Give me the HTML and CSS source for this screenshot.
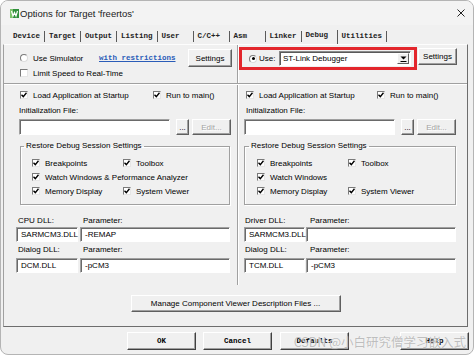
FILE: index.html
```html
<!DOCTYPE html>
<html>
<head>
<meta charset="utf-8">
<title>Options for Target 'freertos'</title>
<link rel="stylesheet" href="styles.css">
</head>
<body>
<div class="window">
	<div class="titlebar">
		<svg class="app-icon" width="9" height="9" viewBox="0 0 9 9">
			<rect width="9" height="9" fill="#2f8f3c"/>
			<rect width="3" height="9" fill="#7cc36b"/>
			<polyline points="1.5,2 3,7 4.5,3.5 6,7 7.5,2" fill="none" stroke="#fff" stroke-width="1.2"/>
		</svg>
		<span class="title">Options for Target 'freertos'</span>
		<svg class="close" width="8" height="8" viewBox="0 0 8 8">
			<path d="M0.5 0.5 L7.5 7.5 M7.5 0.5 L0.5 7.5" stroke="#222" stroke-width="1"/>
		</svg>
	</div>

	<div class="tabs">
		<span class="tab">Device</span>
		<span class="tab">Target</span>
		<span class="tab">Output</span>
		<span class="tab">Listing</span>
		<span class="tab">User</span>
		<span class="tab">C/C++</span>
		<span class="tab">Asm</span>
		<span class="tab">Linker</span>
		<span class="tab active">Debug</span>
		<span class="tab">Utilities</span>
	</div>

	<div class="page">
		<div class="split top">
			<div class="half left">
				<div class="line sim">
					<label class="opt sim-opt"><span class="radio"></span>Use Simulator</label>
					<a class="restrict">with restrictions</a>
					<button class="btn settings">Settings</button>
				</div>
				<div class="line small">
					<label class="opt"><span class="check"></span>Limit Speed to Real-Time</label>
				</div>
			</div>
			<div class="half right">
				<div class="line use">
					<div class="highlight">
						<label class="opt use-opt"><span class="radio on"></span>Use:</label>
						<div class="combo"><span class="combo-text">ST-Link Debugger</span><span class="drop"><svg width="7" height="6" viewBox="0 0 7 6"><path d="M0.5 0.5 H6.5 L3.5 3.5 Z" fill="#000"/><path d="M0.5 5.5 H6.5" stroke="#000"/></svg></span></div>
					</div>
					<button class="btn settings-r">Settings</button>
				</div>
			</div>
		</div>

		<div class="sep"></div>

		<div class="split main">
			<div class="half left">
				<div class="line checks">
					<label class="opt first"><span class="check on"><svg width="6" height="6" viewBox="0 0 6 6"><path d="M0.5 2.8 L2.3 4.6 L5.5 0.8" fill="none" stroke="#000" stroke-width="1.4"/></svg></span>Load Application at Startup</label>
					<label class="opt"><span class="check on"><svg width="6" height="6" viewBox="0 0 6 6"><path d="M0.5 2.8 L2.3 4.6 L5.5 0.8" fill="none" stroke="#000" stroke-width="1.4"/></svg></span>Run to main()</label>
				</div>
				<div class="line label init">Initialization File:</div>
				<div class="file-row">
					<div class="field file"></div>
					<button class="btn dots">...</button>
					<button class="btn edit" disabled>Edit...</button>
				</div>
				<fieldset class="group">
					<legend>Restore Debug Session Settings</legend>
					<div class="grow">
						<label class="opt first"><span class="check on"><svg width="6" height="6" viewBox="0 0 6 6"><path d="M0.5 2.8 L2.3 4.6 L5.5 0.8" fill="none" stroke="#000" stroke-width="1.4"/></svg></span>Breakpoints</label>
						<label class="opt"><span class="check on"><svg width="6" height="6" viewBox="0 0 6 6"><path d="M0.5 2.8 L2.3 4.6 L5.5 0.8" fill="none" stroke="#000" stroke-width="1.4"/></svg></span>Toolbox</label>
					</div>
					<div class="grow">
						<label class="opt"><span class="check on"><svg width="6" height="6" viewBox="0 0 6 6"><path d="M0.5 2.8 L2.3 4.6 L5.5 0.8" fill="none" stroke="#000" stroke-width="1.4"/></svg></span>Watch Windows &amp; Peformance Analyzer</label>
					</div>
					<div class="grow">
						<label class="opt first"><span class="check on"><svg width="6" height="6" viewBox="0 0 6 6"><path d="M0.5 2.8 L2.3 4.6 L5.5 0.8" fill="none" stroke="#000" stroke-width="1.4"/></svg></span>Memory Display</label>
						<label class="opt"><span class="check on"><svg width="6" height="6" viewBox="0 0 6 6"><path d="M0.5 2.8 L2.3 4.6 L5.5 0.8" fill="none" stroke="#000" stroke-width="1.4"/></svg></span>System Viewer</label>
					</div>
				</fieldset>
				<div class="dll-labels first"><span class="dll-name">CPU DLL:</span><span class="dll-param">Parameter:</span></div>
				<div class="dll-row"><div class="field dll">SARMCM3.DLL</div><div class="field param">-REMAP</div></div>
				<div class="dll-labels"><span class="dll-name">Dialog DLL:</span><span class="dll-param">Parameter:</span></div>
				<div class="dll-row second"><div class="field dll">DCM.DLL</div><div class="field param">-pCM3</div></div>
			</div>

			<div class="half right">
				<div class="line checks">
					<label class="opt first"><span class="check on"><svg width="6" height="6" viewBox="0 0 6 6"><path d="M0.5 2.8 L2.3 4.6 L5.5 0.8" fill="none" stroke="#000" stroke-width="1.4"/></svg></span>Load Application at Startup</label>
					<label class="opt"><span class="check on"><svg width="6" height="6" viewBox="0 0 6 6"><path d="M0.5 2.8 L2.3 4.6 L5.5 0.8" fill="none" stroke="#000" stroke-width="1.4"/></svg></span>Run to main()</label>
				</div>
				<div class="line label init">Initialization File:</div>
				<div class="file-row">
					<div class="field file"></div>
					<button class="btn dots">...</button>
					<button class="btn edit" disabled>Edit...</button>
				</div>
				<fieldset class="group">
					<legend>Restore Debug Session Settings</legend>
					<div class="grow">
						<label class="opt first"><span class="check on"><svg width="6" height="6" viewBox="0 0 6 6"><path d="M0.5 2.8 L2.3 4.6 L5.5 0.8" fill="none" stroke="#000" stroke-width="1.4"/></svg></span>Breakpoints</label>
						<label class="opt"><span class="check on"><svg width="6" height="6" viewBox="0 0 6 6"><path d="M0.5 2.8 L2.3 4.6 L5.5 0.8" fill="none" stroke="#000" stroke-width="1.4"/></svg></span>Toolbox</label>
					</div>
					<div class="grow">
						<label class="opt"><span class="check on"><svg width="6" height="6" viewBox="0 0 6 6"><path d="M0.5 2.8 L2.3 4.6 L5.5 0.8" fill="none" stroke="#000" stroke-width="1.4"/></svg></span>Watch Windows</label>
					</div>
					<div class="grow">
						<label class="opt first"><span class="check on"><svg width="6" height="6" viewBox="0 0 6 6"><path d="M0.5 2.8 L2.3 4.6 L5.5 0.8" fill="none" stroke="#000" stroke-width="1.4"/></svg></span>Memory Display</label>
						<label class="opt"><span class="check on"><svg width="6" height="6" viewBox="0 0 6 6"><path d="M0.5 2.8 L2.3 4.6 L5.5 0.8" fill="none" stroke="#000" stroke-width="1.4"/></svg></span>System Viewer</label>
					</div>
				</fieldset>
				<div class="dll-labels first"><span class="dll-name">Driver DLL:</span><span class="dll-param">Parameter:</span></div>
				<div class="dll-row"><div class="field dll">SARMCM3.DLL</div><div class="field param"></div></div>
				<div class="dll-labels"><span class="dll-name">Dialog DLL:</span><span class="dll-param">Parameter:</span></div>
				<div class="dll-row second"><div class="field dll">TCM.DLL</div><div class="field param">-pCM3</div></div>
			</div>
		</div>

		<div class="manage">
			<button class="btn manage-btn">Manage Component Viewer Description Files ...</button>
		</div>
	</div>

	<div class="actions">
		<button class="btn action ok">OK</button>
		<button class="btn action">Cancel</button>
		<button class="btn action">Defaults</button>
		<button class="btn action help">Help</button>
	</div>

	<div class="watermark">CSDN @小白研究僧学习嵌入式</div>
</div>
</body>
</html>
```

FILE: styles.css
```css
body {
	margin: 0;
	background: #fff;
}

.window {
	position: relative;
	width: 474px;
	height: 355px;
	box-sizing: border-box;
	border: 1px solid #b4b4b4;
	border-radius: 8px;
	background: #f0f0f0;
	display: flex;
	flex-direction: column;
	overflow: hidden;
	font: 8px "Liberation Sans", Arial, sans-serif;
	color: #000;
}

/* title bar */
.titlebar {
	height: 24px;
	display: flex;
	align-items: center;
	padding: 0 8px 0 9px;
	background: #f3f3f3;
}
.title {
	margin-left: 1px;
	font-size: 9.5px;
	color: #1a1a1a;
}
.close {
	margin-left: auto;
}

/* tab strip */
.tabs {
	height: 19px;
	display: flex;
	align-items: flex-end;
	padding-left: 8px;
	font: bold 7.5px "Liberation Mono", "Courier New", monospace;
	color: #222;
}
.tab {
	height: 11px;
	line-height: 11px;
	min-width: 36px;
	box-sizing: border-box;
	padding: 0 4px;
	margin-bottom: 2px;
	border-right: 1px solid #5a5a5a;
}
.tab.active {
	height: 14px;
	line-height: 10px;
	margin-bottom: 0;
}

/* tab page */
.page {
	height: 283px;
	box-sizing: border-box;
	margin: 0 5px 0 2px;
	border: 1px solid;
	border-color: #fdfdfd #6d6d6d #6d6d6d #a0a0a0;
	display: flex;
	flex-direction: column;
}

.split {
	display: flex;
}
.split.top {
	height: 38px;
}
.split.main {
	height: 200px;
}
.half.left {
	width: 233px;
	box-sizing: border-box;
	padding: 0 5px 0 12px;
	display: flex;
	flex-direction: column;
}
.half.right {
	flex: 1;
	border-left: 1px solid #a0a0a0;
	box-shadow: inset 1px 0 0 #fff;
	padding: 0 10px 0 6px;
	display: flex;
	flex-direction: column;
}

.sep {
	height: 1px;
	background: #a0a0a0;
	border-bottom: 1px solid #fff;
}

.line {
	display: flex;
	align-items: center;
	height: 12px;
	white-space: nowrap;
}
.line.sim {
	height: 18px;
	margin-top: 4px;
	padding-left: 4px;
}
.line.small {
	padding-left: 4px;
}
.line.use {
	height: auto;
	align-items: flex-start;
	margin-left: -5px;
}
.line.checks {
	margin-top: 4px;
}
.left .line.checks {
	padding-left: 4px;
}
.right .line.checks {
	padding-left: 2px;
}
.line.init {
	margin-top: 3px;
}
.left .line.init {
	padding-left: 3px;
}
.right .line.init {
	padding-left: 2px;
}

/* options */
.opt {
	display: flex;
	align-items: center;
	white-space: nowrap;
}
.left .checks .opt.first {
	width: 133px;
}
.right .checks .opt.first {
	width: 131px;
}
.sim-opt {
	width: 79px;
}

.check {
	width: 8px;
	height: 8px;
	box-sizing: border-box;
	margin-right: 5px;
	background: #fff;
	border: 1px solid;
	border-color: #7a7a7a #e6e6e6 #e6e6e6 #7a7a7a;
	display: flex;
	align-items: center;
	justify-content: center;
	flex: none;
}
.radio {
	width: 8px;
	height: 8px;
	box-sizing: border-box;
	margin-right: 5px;
	border-radius: 50%;
	background: #fff;
	border: 1px solid;
	border-color: #7a7a7a #dcdcdc #dcdcdc #7a7a7a;
	display: flex;
	align-items: center;
	justify-content: center;
	flex: none;
}
.radio.on::after {
	content: "";
	width: 3px;
	height: 3px;
	border-radius: 50%;
	background: #000;
}
.use-opt .radio {
	margin-right: 2px;
}

.restrict {
	font: bold 7.5px "Liberation Mono", "Courier New", monospace;
	color: #2a5cb8;
	text-decoration: underline;
}

/* buttons and fields */
.btn {
	margin: 0;
	padding: 0;
	background: #f0f0f0;
	border: 1px solid;
	border-color: #fff #5f5f5f #5f5f5f #fff;
	box-shadow: inset -1px -1px 0 #a0a0a0;
	font: 8px "Liberation Sans", Arial, sans-serif;
	color: #000;
	white-space: nowrap;
}
.btn:disabled {
	color: #a3a3a3;
	text-shadow: 1px 1px 0 #fff;
}
.settings {
	margin-left: auto;
	width: 44px;
	height: 18px;
}
.settings-r {
	width: 39px;
	height: 17px;
	margin: 3px 0 0 1px;
}

.field {
	box-sizing: border-box;
	background: #fff;
	border: 1px solid;
	border-color: #a0a0a0 #fff #fff #a0a0a0;
	box-shadow: inset 1px 1px 0 #6a6a6a;
	padding-left: 4px;
	display: flex;
	align-items: center;
	white-space: nowrap;
}

.highlight {
	width: 178px;
	height: 23px;
	box-sizing: border-box;
	margin-top: 2px;
	border: 3px solid #e3262c;
	padding: 0 3px 0 7px;
	display: flex;
	align-items: center;
}
.combo {
	margin-left: auto;
	width: 132px;
	height: 15px;
	box-sizing: border-box;
	background: #fff;
	border: 1px solid;
	border-color: #8a8a8a #fff #fff #8a8a8a;
	box-shadow: inset 1px 1px 0 #5a5a5a;
	display: flex;
	align-items: center;
	padding: 0 1px 0 3px;
}
.combo-text {
	flex: 1;
}
.drop {
	width: 12px;
	height: 11px;
	box-sizing: border-box;
	background: #f0f0f0;
	border: 1px solid;
	border-color: #fff #5f5f5f #5f5f5f #fff;
	display: flex;
	align-items: center;
	justify-content: center;
}

.file-row {
	display: flex;
	height: 16px;
	margin-top: 3px;
}
.left .file-row {
	padding-left: 3px;
	padding-right: 1px;
}
.right .file-row {
	padding-right: 1px;
}
.field.file {
	width: 151px;
}
.dots {
	width: 13px;
	margin-left: 6px;
}
.edit {
	flex: 1;
	margin-left: 3px;
}

/* group box */
.group {
	margin: 5px 2px 0 4px;
	padding: 4px 0 6px 11px;
	border: 1px solid #a0a0a0;
	box-shadow: 1px 1px 0 #fff, inset 1px 1px 0 #fff;
	min-width: 0;
}
.right .group {
	margin: 5px 1px 0 0;
	padding-left: 12px;
}
.group legend {
	height: 12px;
	line-height: 12px;
	padding: 0 2px;
	margin-left: -8px;
}
.grow {
	display: flex;
	align-items: center;
	height: 14px;
	white-space: nowrap;
}
.grow .opt.first {
	width: 91px;
}

/* dll section */
.dll-labels {
	display: flex;
	height: 12px;
	align-items: center;
	margin-top: 1px;
	white-space: nowrap;
}
.dll-labels.first {
	margin-top: 9px;
}
.dll-name {
	width: 64px;
	padding-left: 2px;
	box-sizing: border-box;
}
.dll-param {
	padding-left: 3px;
}
.right .dll-name {
	width: 62px;
	padding-left: 1px;
}
.right .dll-param {
	padding-left: 4px;
}
.dll-row {
	display: flex;
	height: 15px;
	margin-top: 1px;
}
.dll-row.second {
	margin-top: 3px;
}
.left .dll-row {
	padding-right: 2px;
}
.right .dll-row {
	padding-right: 1px;
}
.field.dll {
	width: 62px;
	flex: none;
}
.right .field.dll {
	width: 61px;
}
.field.param {
	flex: 1;
	margin-left: 2px;
}
.right .field.param {
	margin-left: 1px;
}

.manage {
	display: flex;
	justify-content: center;
	margin-top: 10px;
}
.manage-btn {
	width: 210px;
	height: 17px;
}

/* dialog buttons */
.actions {
	flex: 1;
	display: flex;
	align-items: flex-start;
	padding: 5px 0 0 126px;
}
.action {
	width: 69px;
	height: 18px;
	margin-right: 8px;
	font: bold 7.5px "Liberation Mono", "Courier New", monospace;
	border-color: #fff #404040 #404040 #fff;
}
.action.ok {
	margin-right: 7px;
}
.action.help {
	margin: 0 0 0 43px;
}

.watermark {
	position: absolute;
	right: 7px;
	bottom: 5px;
	font: 12.5px "Noto Sans CJK SC", sans-serif;
	line-height: 15px;
	color: rgba(170, 170, 170, 0.75);
	text-shadow: 0 0 1px rgba(255, 255, 255, 0.9);
	white-space: nowrap;
}
```
